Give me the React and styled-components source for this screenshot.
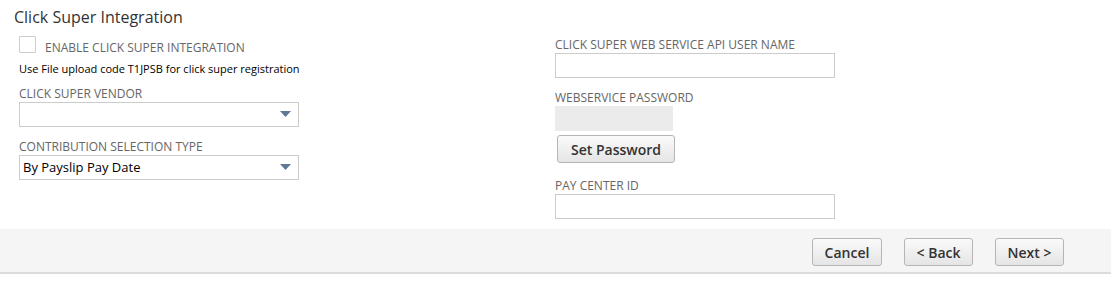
import React from 'react'
import styled, { createGlobalStyle } from 'styled-components'

const GlobalStyle = createGlobalStyle`
  body {
    margin: 0;
    background: #fff;
    font-family: 'Open Sans', 'Liberation Sans', sans-serif;
    color: #333;
  }
`

const Page = styled.div`
  width: 1111px;
  height: 282px;
  overflow: hidden;
`

const Title = styled.h1`
  margin: 7px 0 0 14px;
  font-size: 16px;
  line-height: 20px;
  font-weight: normal;
  color: #333;
`

const Form = styled.div`
  display: grid;
  grid-template-columns: 280px 280px;
  column-gap: 256px;
  padding-left: 19px;
  margin-top: 9px;
  height: 184px;
`

const Column = styled.div`
  display: flex;
  flex-direction: column;
  align-items: flex-start;
  padding-top: ${(p) => p.offset || 0}px;
`

const CheckRow = styled.label`
  display: flex;
  align-items: flex-start;
`

const Checkbox = styled.span`
  width: 15px;
  height: 15px;
  border: 1px solid #ccc;
  background: #fff;
  border-radius: 1px;
`

const CheckLabel = styled.span`
  margin-left: 9px;
  padding-top: 5px;
  font-size: 12px;
  line-height: 14px;
  color: #666;
  text-transform: uppercase;
`

const Help = styled.div`
  margin-top: 7px;
  font-size: 11px;
  line-height: 14px;
  color: #000;
  white-space: nowrap;
`

const Label = styled.div`
  margin-top: ${(p) => p.gap || 0}px;
  margin-bottom: 1px;
  font-size: 12px;
  line-height: 14px;
  color: #666;
  text-transform: uppercase;
  white-space: nowrap;
`

const Select = styled.div`
  box-sizing: border-box;
  width: 280px;
  height: 25px;
  border: 1px solid #ccc;
  background: #fff;
  display: flex;
  align-items: center;
  justify-content: space-between;
  padding: 0 7px 1px 3px;
  font-size: 13px;
  color: #000;
`

const Arrow = styled.svg`
  width: 11px;
  height: 6px;
  fill: #5f7898;
`

const Input = styled.div`
  box-sizing: border-box;
  width: 280px;
  height: 25px;
  border: 1px solid #ccc;
  background: #fff;
`

const Masked = styled.div`
  width: 118px;
  height: 25px;
  background: #ebebeb;
`

const Button = styled.button`
  box-sizing: border-box;
  height: 28px;
  width: ${(p) => p.w || 70}px;
  padding: 0;
  margin-top: ${(p) => p.top || 0}px;
  margin-left: ${(p) => p.left || 0}px;
  border: 1px solid #b5b5b5;
  border-radius: 3px;
  background: linear-gradient(#fafafa, #e5e5e5);
  font-family: 'Open Sans', 'Liberation Sans', sans-serif;
  font-size: 14px;
  font-weight: 600;
  color: #333;
  cursor: pointer;
`

const Footer = styled.div`
  display: flex;
  justify-content: flex-end;
  gap: 22px;
  box-sizing: border-box;
  height: 45px;
  padding: 9px 47px 0 0;
  margin-top: 9px;
  background: #f5f5f5;
  border-bottom: 2px solid #dcdcdc;
`

const DropArrow = () => (
  <Arrow viewBox="0 0 11 6">
    <path d="M0 0h11L5.5 6z" />
  </Arrow>
)

export default function App() {
  return (
    <Page>
      <GlobalStyle />
      <Title>Click Super Integration</Title>
      <Form>
        <Column>
          <CheckRow>
            <Checkbox />
            <CheckLabel>Enable Click Super Integration</CheckLabel>
          </CheckRow>
          <Help>Use File upload code T1JPSB for click super registration</Help>
          <Label gap={11}>Click Super Vendor</Label>
          <Select>
            <span />
            <DropArrow />
          </Select>
          <Label gap={13}>Contribution Selection Type</Label>
          <Select>
            <span>By Payslip Pay Date</span>
            <DropArrow />
          </Select>
        </Column>
        <Column offset={2}>
          <Label>Click Super Web Service API User Name</Label>
          <Input />
          <Label gap={13}>Webservice Password</Label>
          <Masked />
          <Button w={118} top={4} left={2}>Set Password</Button>
          <Label gap={16}>Pay Center ID</Label>
          <Input />
        </Column>
      </Form>
      <Footer>
        <Button>Cancel</Button>
        <Button w={69}>&lt; Back</Button>
        <Button w={69}>Next &gt;</Button>
      </Footer>
    </Page>
  )
}
